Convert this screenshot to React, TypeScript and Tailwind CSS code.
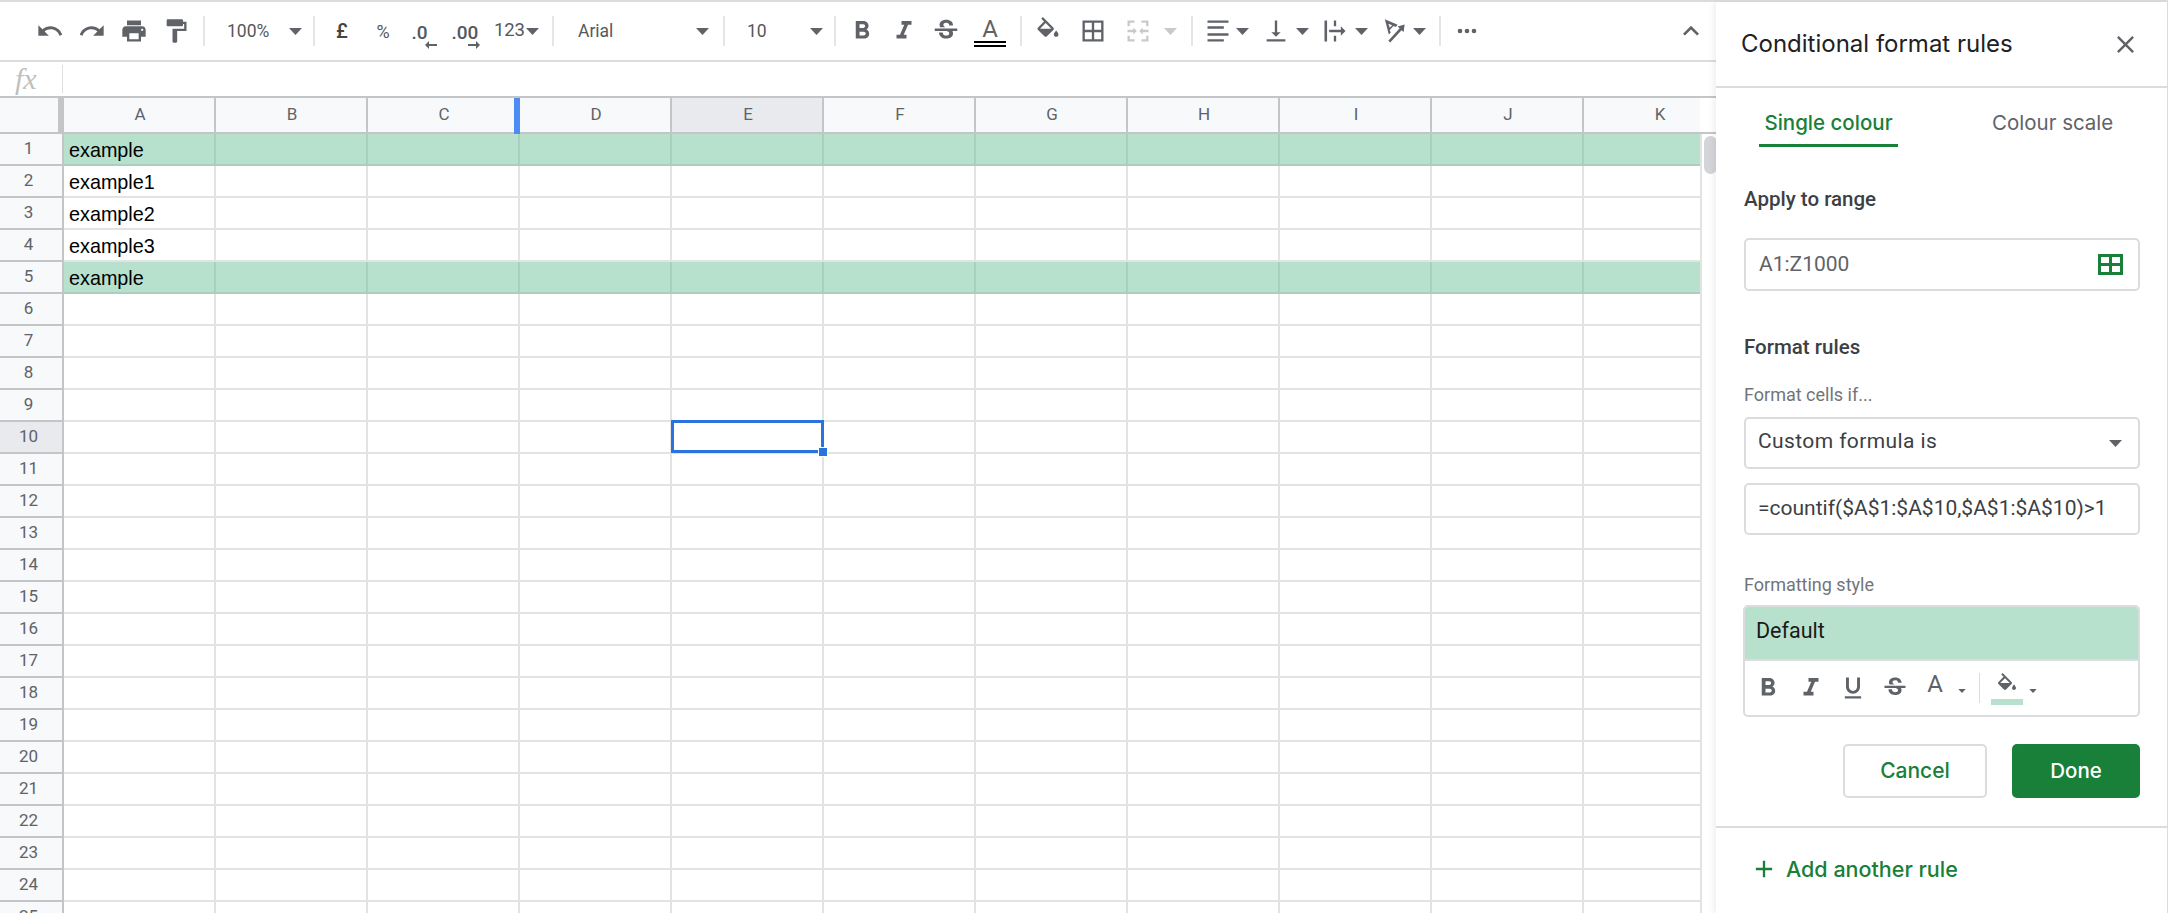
import React from 'react';

const ICON = {
  undo: 'M12.5 8c-2.65 0-5.05.99-6.9 2.6L2 7v9h9l-3.62-3.62c1.39-1.16 3.16-1.88 5.12-1.88 3.54 0 6.55 2.31 7.6 5.5l2.37-.78C21.08 11.03 17.15 8 12.5 8z',
  redo: 'M18.4 10.6C16.55 8.99 14.15 8 11.5 8c-4.65 0-8.58 3.03-9.96 7.22L3.9 16c1.05-3.19 4.05-5.5 7.6-5.5 1.95 0 3.73.72 5.12 1.88L13 16h9V7l-3.6 3.6z',
  print: 'M19 8H5c-1.66 0-3 1.34-3 3v6h4v4h12v-4h4v-6c0-1.66-1.34-3-3-3zm-3 11H8v-5h8v5zm3-7c-.55 0-1-.45-1-1s.45-1 1-1 1 .45 1 1-.45 1-1 1zm-1-9H6v4h12V3z',
  paint: 'M18 4V3c0-.55-.45-1-1-1H5c-.55 0-1 .45-1 1v4c0 .55.45 1 1 1h12c.55 0 1-.45 1-1V6h1v4H9v11c0 .55.45 1 1 1h2c.55 0 1-.45 1-1v-9h8V4h-3z',
  bold: 'M15.6 10.79c.97-.67 1.65-1.77 1.65-2.79 0-2.26-1.75-4-4-4H7v14h7.04c2.09 0 3.71-1.7 3.71-3.79 0-1.52-.86-2.82-2.15-3.42zM10 6.5h3c.83 0 1.5.67 1.5 1.5s-.67 1.5-1.5 1.5h-3v-3zm3.5 9H10v-3h3.5c.83 0 1.5.67 1.5 1.5s-.67 1.5-1.5 1.5z',
  italic: 'M10 4v3h2.21l-3.42 8H6v3h8v-3h-2.21l3.42-8H18V4z',
  strike: 'M6.85 7.08C6.85 4.37 9.45 3 12.24 3c1.64 0 3 .49 3.9 1.28.77.65 1.46 1.73 1.46 3.24h-3.01c0-.31-.05-.59-.15-.85-.29-.86-1.2-1.28-2.25-1.28-1.86 0-2.34 1.02-2.34 1.7 0 .48.25.88.74 1.21.38.25.77.48 1.41.7H7.39c-.21-.34-.54-.89-.54-1.92zM21 12v-2H3v2h9.62c1.15.45 1.96.75 1.96 1.97 0 1-.81 1.67-2.28 1.67-1.54 0-2.93-.54-2.93-2.51H6.4c0 .55.08 1.13.24 1.58.81 2.29 3.29 3.3 5.67 3.3 2.27 0 5.3-.89 5.3-4.05 0-.3-.01-1.16-.48-1.96H21z',
  underline: 'M12 17c3.31 0 6-2.69 6-6V3h-2.5v8c0 1.93-1.57 3.5-3.5 3.5S8.5 12.93 8.5 11V3H6v8c0 3.31 2.69 6 6 6zm-7 2v2h14v-2H5z',
  fill: 'M16.56 8.94L7.62 0 6.21 1.41l2.38 2.38-5.15 5.15c-.59.59-.59 1.54 0 2.12l5.5 5.5c.29.29.68.44 1.06.44s.77-.15 1.06-.44l5.5-5.5c.59-.58.59-1.53 0-2.12zM5.21 10L10 5.21 14.79 10H5.21zM19 11.5s-2 2.17-2 3.5c0 1.1.9 2 2 2s2-.9 2-2c0-1.33-2-3.5-2-3.5z',
  borders: 'M3 3v18h18V3H3zm8 16H5v-6h6v6zm0-8H5V5h6v6zm8 8h-6v-6h6v6zm0-8h-6V5h6v6z',
  merge: 'M3 3h6v2H5v3H3V3zm12 0h6v5h-2V5h-4V3zM3 16h2v3h4v2H3v-5zm16 0h2v5h-6v-2h4v-3zM3 11h5V9l3 3-3 3v-2H3v-2zm18 0h-5V9l-3 3 3 3v-2h5v-2z',
  align: 'M3 3h18v2H3V3zm0 5h14v2H3V8zm0 6h18v2H3v-2zm0 5h14v2H3v-2z',
  valign: 'M16 13h-3V3h-2v10H8l4 4 4-4zM4 19v2h16v-2H4z',
  wrap: 'M3 3h2.2v18H3V3zm8 0h2v5h-2V3zm0 13h2v5h-2v-5zM7 11h10V8l4 4-4 4v-3H7v-2z',
  rotate: 'M5 2l11 4.6-1.7 1.9-1.9-.8-3.3 3.7 1 1.8-1.7 1.9L5 2zm3 3.8l1.3 3.4 2-2.2L8 5.8zM8 20.4l9.7-10.7-1.8-1.6L22 6.5l-.9 6.4-1.8-1.6L9.6 21.9 8 20.4z',
  more: 'M6 10a2 2 0 100 4 2 2 0 000-4zm12 0a2 2 0 100 4 2 2 0 000-4zm-6 0a2 2 0 100 4 2 2 0 000-4z',
  chevron: 'M12 8l-6 6 1.41 1.41L12 10.83l4.59 4.58L18 14z',
  close: 'M19 6.41L17.59 5 12 10.59 6.41 5 5 6.41 10.59 12 5 17.59 6.41 19 12 13.41 17.59 19 19 17.59 13.41 12z',
  plus: 'M19 13h-6v6h-2v-6H5v-2h6V5h2v6h6v2z',
};

const Icon = ({ d, className = 'w-[28px] h-[28px] text-[#5f6368]' }: { d: string; className?: string }) => (
  <svg viewBox="0 0 24 24" fill="currentColor" className={`shrink-0 ${className}`}>
    <path d={d} />
  </svg>
);

const Caret = ({ className = 'w-[13px] h-[7px] text-[#5f6368]' }: { className?: string }) => (
  <svg viewBox="0 0 13 7" fill="currentColor" className={`shrink-0 ${className}`}>
    <path d="M0 0h13L6.5 7z" />
  </svg>
);

const Sep = ({ className }: { className: string }) => (
  <div className={`w-[2px] h-[30px] shrink-0 bg-[#e4e5e6] ${className}`} />
);

const Slot = ({ className, children }: { className: string; children: React.ReactNode }) => (
  <div className={`flex items-center justify-center shrink-0 h-full ${className}`}>{children}</div>
);

const Toolbar = () => (
  <div className="flex items-center h-[60px] shrink-0 pl-[28px] border-b-2 border-[#dadce0] text-[17.5px] text-[#55585c]">
    <Slot className="w-[43px]"><Icon d={ICON.undo} /></Slot>
    <Slot className="w-[42px]"><Icon d={ICON.redo} /></Slot>
    <Slot className="w-[42px]"><Icon d={ICON.print} /></Slot>
    <Slot className="w-[42px]"><Icon d={ICON.paint} /></Slot>
    <Sep className="ml-[6px]" />
    <span className="ml-[22px] mt-[1px] w-[62px]">100%</span>
    <Caret />
    <Sep className="ml-[11px]" />
    <Slot className="ml-[7px] w-[40px]"><span className="text-[20px] font-medium text-[#444]">£</span></Slot>
    <Slot className="w-[42px]"><span className="text-[18px]">%</span></Slot>
    <Slot className="w-[40px]">
      <div className="flex flex-col items-end leading-none mt-[10px]">
        <span className="mr-[9px] text-[19px] font-medium">.0</span>
        <svg viewBox="0 0 12 8" fill="currentColor" className="w-[12px] h-[8px] -mt-[1px] text-[#5f6368]"><path d="M0 4l4-4v3h8v2H4v3z" /></svg>
      </div>
    </Slot>
    <Slot className="w-[44px]">
      <div className="flex flex-col items-end leading-none mt-[10px]">
        <span className="mr-[2px] text-[19px] font-medium">.00</span>
        <svg viewBox="0 0 12 8" fill="currentColor" className="w-[12px] h-[8px] -mt-[1px] text-[#5f6368]"><path d="M12 4L8 0v3H0v2h8v3z" /></svg>
      </div>
    </Slot>
    <span className="ml-[6px] w-[32px] text-[18.5px] tracking-[-0.2px]">123</span>
    <Caret />
    <Sep className="ml-[13px]" />
    <span className="ml-[24px] mt-[1px] w-[118px]">Arial</span>
    <Caret />
    <Sep className="ml-[14px]" />
    <span className="ml-[22px] mt-[1px] w-[63px]">10</span>
    <Caret />
    <Sep className="ml-[11px]" />
    <Slot className="ml-[5px] w-[42px]"><Icon d={ICON.bold} className="w-[30px] h-[30px] text-[#5f6368]" /></Slot>
    <Slot className="w-[42px]"><Icon d={ICON.italic} className="w-[30px] h-[30px] text-[#5f6368]" /></Slot>
    <Slot className="w-[42px]"><Icon d={ICON.strike} className="w-[30px] h-[30px] text-[#5f6368]" /></Slot>
    <Slot className="w-[46px]">
      <div className="flex flex-col items-center mt-[2px]">
        <span className="text-[24px] leading-[24px] text-[#5f6368]">A</span>
        <div className="w-[32px] h-[6px] border-y-2 border-black" />
      </div>
    </Slot>
    <Sep className="ml-[7px]" />
    <Slot className="w-[52px]"><Icon d={ICON.fill} /></Slot>
    <Slot className="w-[38px]"><Icon d={ICON.borders} /></Slot>
    <Slot className="w-[52px]"><Icon d={ICON.merge} className="w-[28px] h-[28px] text-[#c8c9ca]" /></Slot>
    <Caret className="w-[13px] h-[7px] text-[#c8c9ca]" />
    <Sep className="ml-[14px]" />
    <Slot className="ml-[7px] w-[36px]"><Icon d={ICON.align} /></Slot>
    <Caret />
    <Slot className="ml-[9px] w-[36px]"><Icon d={ICON.valign} /></Slot>
    <Caret className="ml-[2px] w-[13px] h-[7px] text-[#5f6368]" />
    <Slot className="ml-[8px] w-[36px]"><Icon d={ICON.wrap} /></Slot>
    <Caret className="ml-[2px] w-[13px] h-[7px] text-[#5f6368]" />
    <Slot className="ml-[7px] w-[36px]"><Icon d={ICON.rotate} /></Slot>
    <Caret className="ml-[2px] w-[13px] h-[7px] text-[#5f6368]" />
    <Sep className="ml-[13px]" />
    <Slot className="ml-[8px] w-[36px]"><Icon d={ICON.more} /></Slot>
    <Slot className="ml-auto mr-[7px] w-[36px]"><Icon d={ICON.chevron} className="w-[32px] h-[32px] text-[#5f6368]" /></Slot>
  </div>
);

const FormulaBar = () => (
  <div className="flex items-center h-[36px] shrink-0 border-b-2 border-[#c4c5c6]">
    <span className="w-[62px] pl-[15px] font-['Liberation_Serif',serif] italic text-[30px] leading-none text-[#c0c0c0]">fx</span>
    <div className="w-px h-[28px] bg-[#e0e0e0]" />
  </div>
);

const COLUMNS = ['A', 'B', 'C', 'D', 'E', 'F', 'G', 'H', 'I', 'J', 'K'];
const ROWS = Array.from({ length: 25 }, (_, i) => i + 1);
const CELLS: Record<number, string> = { 1: 'example', 2: 'example1', 3: 'example2', 4: 'example3', 5: 'example' };

const ColumnHeader = () => (
  <div className="flex h-[36px] border-b-2 border-[#c4c5c6]">
    <div className="w-[64px] shrink-0 bg-[#f8f9fa] border-r-[6px] border-[#c4c5c6]" />
    {COLUMNS.map((c) => (
      <div
        key={c}
        className={`relative w-[152px] shrink-0 flex items-center justify-center pl-[2px] border-r-2 border-[#c4c5c6] text-[17px] text-[#5f6368] ${c === 'E' ? 'bg-[#e8eaed]' : 'bg-[#f8f9fa]'}`}
      >
        {c}
        {c === 'C' && <div className="absolute -right-[2px] top-0 -bottom-[2px] w-[6px] bg-[#4d8cf5]" />}
      </div>
    ))}
  </div>
);

const Row = ({ n }: { n: number }) => {
  const hit = n === 1 || n === 5;
  return (
    <div className="flex h-[32px] shrink-0">
      <div className={`w-[64px] shrink-0 flex items-center justify-center pr-[5px] border-r-2 border-b-2 border-[#c4c5c6] text-[17px] text-[#5f6368] ${n === 10 ? 'bg-[#e8eaed]' : 'bg-[#f8f9fa]'}`}>
        {n}
      </div>
      {COLUMNS.map((c) => (
        <div
          key={c}
          className={`w-[152px] shrink-0 flex items-end pl-[5px] pb-[1px] border-r-2 border-b-2 font-['Liberation_Sans',sans-serif] text-[19.8px] leading-[25px] text-black ${hit ? 'bg-[#b7e1cd] border-[#a9cfbe]' : 'bg-white border-[#e2e3e3]'}`}
        >
          {c === 'A' ? CELLS[n] : ''}
        </div>
      ))}
    </div>
  );
};

const Sheet = () => (
  <div className="relative flex flex-1 min-h-0 overflow-hidden">
    <div className="w-[1700px] shrink-0 overflow-hidden">
      <ColumnHeader />
      {ROWS.map((n) => <Row key={n} n={n} />)}
    </div>
    {/* scrollbar */}
    <div className="flex-1 flex flex-col">
      <div className="h-[36px] shrink-0 border-b-2 border-[#c4c5c6]" />
      <div className="flex-1 pt-[2px] pl-[2px] pr-px bg-white border-l-2 border-[#e2e3e3]">
        <div className="w-[13px] h-[38px] rounded-full bg-[#d3d5d9]" />
      </div>
    </div>
    {/* selected cell E10 */}
    <div className="absolute left-[671px] top-[322px] w-[153px] h-[33px] border-[3px] border-[#2a72dd]" />
    <div className="absolute left-[818px] top-[349px] w-[10px] h-[10px] border border-white bg-[#2a72dd]" />
  </div>
);

const field = "h-[52px] flex items-center pl-[12px] pr-[14px] border-2 border-[#dadce0] rounded-[5px] bg-white text-[21px]";
const display = "font-['Inter',sans-serif]";

const Panel = () => (
  <div className="relative w-[452px] shrink-0 flex flex-col bg-white border-r border-[#dadce0] shadow-[-3px_0_5px_rgba(0,0,0,0.06)]">
    <div className="flex items-center justify-between h-[86px] shrink-0 pl-[25px] pr-[27px] border-b-2 border-[#dadce0]">
      <span className={`${display} text-[24px] text-[#202124]`}>Conditional format rules</span>
      <Icon d={ICON.close} className="w-[29px] h-[29px] text-[#5f6368]" />
    </div>
    <div className={`${display} flex h-[59px] shrink-0 text-[20.5px]`}>
      <div className="ml-[43px] w-[139px] flex items-center justify-center pt-[15px] border-b-[3px] border-[#188038] font-medium text-[#188038]">Single colour</div>
      <div className="ml-[94px] flex items-center pt-[15px] pb-[3px] text-[#5f6368]">Colour scale</div>
    </div>
    <div className="flex-1 flex flex-col pl-[28px] pr-[27px]">
      <div className="mt-[40px] h-[24px] leading-[24px] text-[20.5px] font-medium text-[#3c4043]">Apply to range</div>
      <div className="mt-[27px] h-[53px] flex items-center justify-between pl-[13px] pr-[15px] border-2 border-[#dadce0] rounded-[5px] text-[21px] text-[#5f6368]">
        <span>A1:Z1000</span>
        <svg viewBox="0 0 25 21" fill="currentColor" className="w-[25px] h-[21px] text-[#188038]">
          <path fillRule="evenodd" d="M0 0h25v21H0V0zm3 3v6h8V3H3zm11 0v6h8V3h-8zM3 12v6h8v-6H3zm11 0v6h8v-6h-8z" />
        </svg>
      </div>
      <div className="mt-[44px] h-[24px] leading-[24px] text-[20.5px] font-medium text-[#3c4043]">Format rules</div>
      <div className="mt-[24px] h-[24px] leading-[24px] text-[18px] text-[#70757a]">Format cells if...</div>
      <div className={`${field} mt-[10px] pb-[3px] justify-between text-[#3c4043] tracking-[0.4px]`}>
        <span>Custom formula is</span>
        <Caret className="w-[13px] h-[7px] mr-[2px] mt-[3px] text-[#5f6368]" />
      </div>
      <div className={`${field} mt-[14px] text-[#3c4043]`}>=countif($A$1:$A$10,$A$1:$A$10)&gt;1</div>
      <div className="mt-[38px] h-[24px] leading-[24px] text-[18px] text-[#70757a]">Formatting style</div>
      <div className="mt-[8px] -ml-px h-[112px] flex flex-col border-2 border-[#dadce0] rounded-[5px] overflow-hidden">
        <div className="h-[52px] shrink-0 flex items-center pl-[11px] pb-[3px] bg-[#b7e1cd] text-[21.5px] text-[#1a1a1a]">Default</div>
        <div className="flex-1 flex items-center border-t-2 border-[#dadce0]">
          <Slot className="w-[45px]"><Icon d={ICON.bold} className="w-[30px] h-[30px] text-[#5f6368]" /></Slot>
          <Slot className="w-[42px]"><Icon d={ICON.italic} className="w-[30px] h-[30px] text-[#5f6368]" /></Slot>
          <Slot className="w-[42px]"><Icon d={ICON.underline} className="w-[28px] h-[28px] text-[#5f6368]" /></Slot>
          <Slot className="w-[42px]"><Icon d={ICON.strike} className="w-[28px] h-[28px] text-[#5f6368]" /></Slot>
          <Slot className="w-[38px]"><span className="text-[24px] -mt-[8px] text-[#5f6368]">A</span></Slot>
          <Caret className="w-[8px] h-[4px] ml-[4px] mt-[6px] text-[#5f6368]" />
          <div className="ml-[13px] w-px h-[30px] bg-[#dadce0]" />
          <div className="ml-[11px] w-[32px] flex flex-col items-center mt-[2px]">
            <Icon d={ICON.fill} className="w-[24px] h-[24px] text-[#5f6368]" />
            <div className="w-[32px] h-[6px] mt-[2px] bg-[#b7e1cd]" />
          </div>
          <Caret className="w-[8px] h-[4px] ml-[6px] mt-[6px] text-[#5f6368]" />
        </div>
      </div>
      <div className={`${display} mt-[27px] flex justify-end gap-[25px]`}>
        <div className="w-[144px] h-[54px] flex items-center justify-center border-2 border-[#dadce0] rounded-[5px] text-[21px] font-medium text-[#188038]">Cancel</div>
        <div className="w-[128px] h-[54px] flex items-center justify-center rounded-[5px] bg-[#188038] text-[20.5px] font-medium text-white">Done</div>
      </div>
    </div>
    <div className="relative h-[2px] shrink-0 mb-[85px] bg-[#dadce0]">
      <div className="absolute left-[36px] top-[27px] flex items-center gap-[8px] text-[#188038]">
        <Icon d={ICON.plus} className="w-[28px] h-[28px] text-[#188038] -ml-[2px]" />
        <span className={`${display} text-[21.5px] font-medium`}>Add another rule</span>
      </div>
    </div>
  </div>
);

export default function App() {
  return (
    <div className="w-[2168px] h-[913px] overflow-hidden flex flex-col bg-white font-['Roboto',sans-serif]">
      <div className="h-[2px] shrink-0 bg-[#dadce0]" />
      <div className="flex flex-1 min-h-0">
        <div className="w-[1716px] shrink-0 flex flex-col min-h-0">
          <Toolbar />
          <FormulaBar />
          <Sheet />
        </div>
        <Panel />
      </div>
    </div>
  );
}
